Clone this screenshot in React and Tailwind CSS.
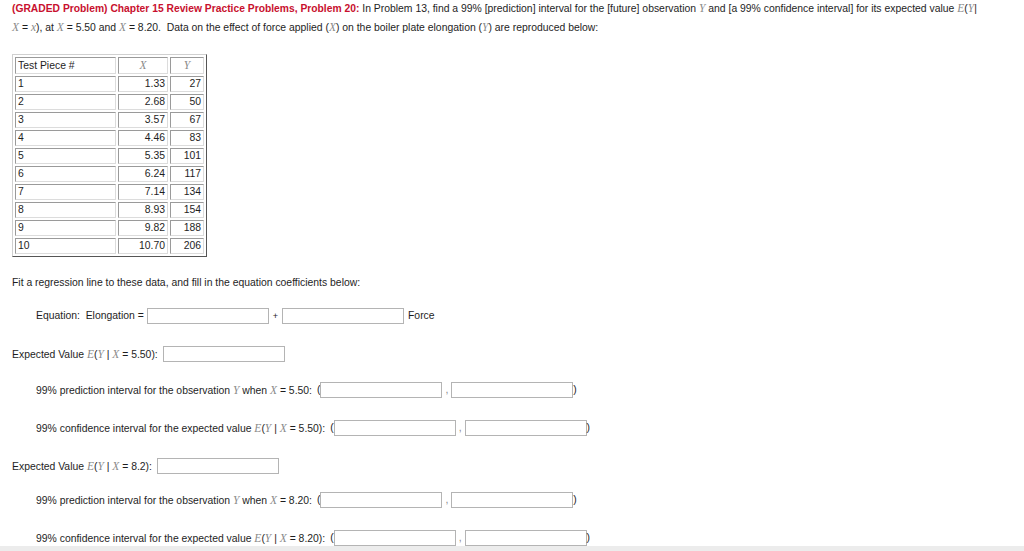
import React from "react";

const rows = [
  ["1", "1.33", "27"],
  ["2", "2.68", "50"],
  ["3", "3.57", "67"],
  ["4", "4.46", "83"],
  ["5", "5.35", "101"],
  ["6", "6.24", "117"],
  ["7", "7.14", "134"],
  ["8", "8.93", "154"],
  ["9", "9.82", "188"],
  ["10", "10.70", "206"],
];

function M({ children }) {
  return <span className="font-['Liberation_Serif',serif] italic text-[#8a8a8a] text-[11.5px]">{children}</span>;
}

function Box() {
  return <input type="text" className="w-[122px] h-[16px] border border-[#b4b4b4] bg-white outline-none" />;
}

function Interval({ label }) {
  return (
    <div className="h-[20px] flex items-center pl-6">
      <span>{label}</span>
      <span className="ml-[5px]">(</span>
      <Box />
      <span className="mx-[3px] text-[#888]">,</span>
      <Box />
      <span>)</span>
    </div>
  );
}

export default function App() {
  const cell = "border border-t-[#9a9a9a] border-l-[#9a9a9a] border-b-[#dcdcdc] border-r-[#dcdcdc] h-[16px] px-[2px] py-0 leading-[14px]";
  return (
    <div className="relative h-[551px] overflow-hidden bg-white px-3 font-['Liberation_Sans',Arial,sans-serif] text-[10.4px] leading-[18px] text-[#1e1e1e]">
      <p className="-mt-[1px]">
        <span className="font-bold text-[#c8102e] text-[10.3px]">(GRADED Problem) Chapter 15 Review Practice Problems, Problem 20:</span>
        {"  "}In Problem 13, find a 99% [prediction] interval for the [future] observation <M>Y</M> and [a 99% confidence interval] for its expected value <M>E</M>(<M>Y</M>|
        <br />
        <M>X</M> = <M>x</M>), at <M>X</M> = 5.50 and <M>X</M> = 8.20.&nbsp; Data on the effect of force applied (<M>X</M>) on the boiler plate elongation (<M>Y</M>) are reproduced below:
      </p>

      <table className="mt-[17px] border-separate border-spacing-[2px] border border-t-[#d0d0d0] border-l-[#d0d0d0] border-b-[#555] border-r-[#555]">
        <thead>
          <tr>
            <td className={`${cell} w-[101px] text-left`}>Test Piece #</td>
            <td className={`${cell} w-[50px] text-center`}><M>X</M></td>
            <td className={`${cell} w-[34px] text-center`}><M>Y</M></td>
          </tr>
        </thead>
        <tbody>
          {rows.map((r) => (
            <tr key={r[0]}>
              <td className={`${cell} text-left`}>{r[0]}</td>
              <td className={`${cell} text-right`}>{r[1]}</td>
              <td className={`${cell} text-right`}>{r[2]}</td>
            </tr>
          ))}
        </tbody>
      </table>

      <div className="mt-[16px] h-[20px] flex items-center">Fit a regression line to these data, and fill in the equation coefficients below:</div>

      <div className="mt-[13px] h-[20px] flex items-center pl-6">
        <span>Equation:&nbsp; Elongation =</span>
        <span className="ml-[3px]"><Box /></span>
        <span className="mx-[4px] text-[9px]">+</span>
        <Box />
        <span className="ml-[4px]">Force</span>
      </div>

      <div className="mt-[18px] h-[20px] flex items-center">
        <span>Expected Value <M>E</M>(<M>Y</M> | <M>X</M> = 5.50):</span>
        <span className="ml-[5px]"><Box /></span>
      </div>

      <div className="mt-[16px]">
        <Interval label={<>99% prediction interval for the observation <M>Y</M> when <M>X</M> = 5.50:</>} />
      </div>
      <div className="mt-[18px]">
        <Interval label={<>99% confidence interval for the expected value <M>E</M>(<M>Y</M> | <M>X</M> = 5.50):</>} />
      </div>

      <div className="mt-[18px] h-[20px] flex items-center">
        <span>Expected Value <M>E</M>(<M>Y</M> | <M>X</M> = 8.2):</span>
        <span className="ml-[5px]"><Box /></span>
      </div>

      <div className="mt-[14px]">
        <Interval label={<>99% prediction interval for the observation <M>Y</M> when <M>X</M> = 8.20:</>} />
      </div>
      <div className="mt-[18px]">
        <Interval label={<>99% confidence interval for the expected value <M>E</M>(<M>Y</M> | <M>X</M> = 8.20):</>} />
      </div>

      <div className="absolute left-0 right-0 bottom-0 h-[5px] bg-[#ececec]" />
    </div>
  );
}
